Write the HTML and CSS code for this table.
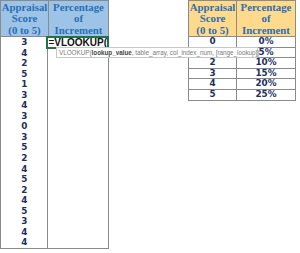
FILE: index.html
```html
<!DOCTYPE html>
<html>
<head>
<meta charset="utf-8">
<link rel="stylesheet" href="styles.css">
</head>
<body>
<div class="sheet">
  <div class="tbl left">
    <div class="head blue">
      <div class="hc c1">Appraisal<br>Score<br>(0 to 5)</div>
      <div class="hc c2">Percentage<br>of<br>Increment</div>
    </div>
    <div class="body">
      <div class="col c1">
        <div class="cell">3</div><div class="cell">4</div><div class="cell">2</div><div class="cell">5</div>
        <div class="cell">1</div><div class="cell">3</div><div class="cell">4</div><div class="cell">3</div>
        <div class="cell">0</div><div class="cell">3</div><div class="cell">5</div><div class="cell">2</div>
        <div class="cell">4</div><div class="cell">5</div><div class="cell">2</div><div class="cell">4</div>
        <div class="cell">5</div><div class="cell">3</div><div class="cell">4</div><div class="cell">4</div>
      </div>
      <div class="col c2">
        <div class="cell formula"><span class="eq">=</span>VLOOKUP(<span class="caret"></span></div>
      </div>
    </div>
    <div class="tip">VLOOKUP(<b>lookup_value</b>, table_array, col_index_num, [range_lookup])</div>
  </div>
  <div class="tbl right">
    <div class="head gold">
      <div class="hc c1">Appraisal<br>Score<br>(0 to 5)</div>
      <div class="hc c2">Percentage<br>of<br>Increment</div>
    </div>
    <div class="row"><div class="rc c1">0</div><div class="rc c2">0%</div></div>
    <div class="row"><div class="rc c1">1</div><div class="rc c2">5%</div></div>
    <div class="row"><div class="rc c1">2</div><div class="rc c2">10%</div></div>
    <div class="row"><div class="rc c1">3</div><div class="rc c2">15%</div></div>
    <div class="row"><div class="rc c1">4</div><div class="rc c2">20%</div></div>
    <div class="row last"><div class="rc c1">5</div><div class="rc c2">25%</div></div>
  </div>
</div>
</body>
</html>
```
FILE: styles.css
```css
* { box-sizing: border-box; }
html, body { margin: 0; padding: 0; background: #ffffff; }
.sheet {
  display: flex;
  align-items: flex-start;
  gap: 79px;
  width: 300px;
  height: 253px;
}
.tbl {
  position: relative;
  border: 1px solid #8a8a8a;
}
.left { width: 109px; height: 249px; }
.right { width: 108px; }
.head {
  display: flex;
  height: 36px;
  border-bottom: 1px solid #8a8a8a;
}
.blue { background: #9dc3e6; }
.gold { background: #ffd98c; }
.hc {
  font-family: "Liberation Serif", serif;
  font-weight: bold;
  font-size: 10.8px;
  line-height: 11.6px;
  color: #2a6fb3;
  text-align: center;
  padding-top: 0.5px;
  white-space: nowrap;
}
.c1 { width: 48px; border-right: 1px solid #8a8a8a; }
.c2 { flex: 1; }
.body {
  display: flex;
  height: 211px;
}
.col { height: 100%; }
.cell {
  height: 10.55px;
  line-height: 10.55px;
  font-family: "DejaVu Sans", sans-serif;
  font-weight: bold;
  font-size: 8.8px;
  color: #1c3060;
  text-align: center;
}
.formula {
  text-align: left;
  font-family: "Liberation Sans", sans-serif;
  font-size: 10px;
  color: #111111;
  padding-left: 1px;
  outline: 2px solid #217346;
  outline-offset: -1px;
  margin-left: -1px;
  height: 11px;
  line-height: 11px;
}
.eq { font-weight: normal; }
.caret {
  display: inline-block;
  width: 1px;
  height: 9px;
  background: #000;
  vertical-align: -1px;
}
.tip {
  position: absolute;
  left: 55px;
  top: 46px;
  width: 202px;
  height: 11px;
  background: #ffffff;
  border: 1px solid #c8c8c8;
  font-family: "Liberation Sans", sans-serif;
  font-size: 6.3px;
  line-height: 9px;
  color: #7a7a7a;
  padding-left: 2px;
  white-space: nowrap;
  z-index: 2;
}
.tip b { color: #444; }
.row {
  display: flex;
  height: 10.5px;
  border-bottom: 1px solid #8a8a8a;
}
.row.last { border-bottom: none; height: 10px; }
.rc {
  font-family: "DejaVu Sans", sans-serif;
  font-weight: bold;
  font-size: 8.8px;
  line-height: 9.5px;
  color: #1c3060;
  text-align: center;
}
```
